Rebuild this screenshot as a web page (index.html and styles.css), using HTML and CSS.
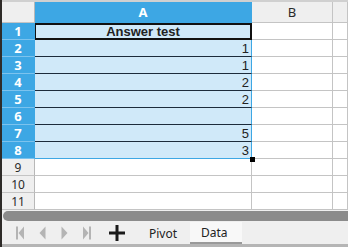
FILE: index.html
```html
<!DOCTYPE html>
<html>
<head>
<meta charset="utf-8">
<link rel="stylesheet" href="styles.css">
</head>
<body>
<div class="app">
  <div class="topline"></div>
  <div class="sheet">
    <div class="row hdr">
      <div class="rh corner"></div>
      <div class="ch ca sel-h">A</div>
      <div class="ch cb">B</div>
      <div class="ch cc"></div>
    </div>
    <div class="row">
      <div class="rh sel-h">1</div>
      <div class="c ca cursor">Answer test</div>
      <div class="c cb"></div><div class="c cc"></div>
    </div>
    <div class="row">
      <div class="rh sel-h">2</div>
      <div class="c ca sel">1</div>
      <div class="c cb"></div><div class="c cc"></div>
    </div>
    <div class="row">
      <div class="rh sel-h">3</div>
      <div class="c ca sel">1</div>
      <div class="c cb"></div><div class="c cc"></div>
    </div>
    <div class="row">
      <div class="rh sel-h">4</div>
      <div class="c ca sel">2</div>
      <div class="c cb"></div><div class="c cc"></div>
    </div>
    <div class="row">
      <div class="rh sel-h">5</div>
      <div class="c ca sel">2</div>
      <div class="c cb"></div><div class="c cc"></div>
    </div>
    <div class="row">
      <div class="rh sel-h">6</div>
      <div class="c ca sel"></div>
      <div class="c cb"></div><div class="c cc"></div>
    </div>
    <div class="row">
      <div class="rh sel-h">7</div>
      <div class="c ca sel">5</div>
      <div class="c cb"></div><div class="c cc"></div>
    </div>
    <div class="row">
      <div class="rh sel-h">8</div>
      <div class="c ca sel last">3<span class="handle"></span></div>
      <div class="c cb"></div><div class="c cc"></div>
    </div>
    <div class="row">
      <div class="rh">9</div>
      <div class="c ca"></div>
      <div class="c cb"></div><div class="c cc"></div>
    </div>
    <div class="row">
      <div class="rh">10</div>
      <div class="c ca"></div>
      <div class="c cb"></div><div class="c cc"></div>
    </div>
    <div class="row">
      <div class="rh">11</div>
      <div class="c ca"></div>
      <div class="c cb"></div><div class="c cc"></div>
    </div>
  </div>
  <div class="scrollbar"><div class="thumb"></div></div>
  <div class="tabbar">
    <svg class="nav n1" width="8" height="14" viewBox="0 0 8 14"><rect x="0" y="0.5" width="2" height="13" fill="#b4b4b4"/><polygon points="8,0.5 2.5,7 8,13.5" fill="#b4b4b4"/></svg>
    <svg class="nav n2" width="7" height="14" viewBox="0 0 7 14"><polygon points="6.5,0.5 0.5,7 6.5,13.5" fill="#b4b4b4"/></svg>
    <svg class="nav n3" width="7" height="14" viewBox="0 0 7 14"><polygon points="0.5,0.5 6.5,7 0.5,13.5" fill="#b4b4b4"/></svg>
    <svg class="nav n4" width="8" height="14" viewBox="0 0 8 14"><polygon points="0,0.5 5.5,7 0,13.5" fill="#b4b4b4"/><rect x="6" y="0.5" width="2" height="13" fill="#b4b4b4"/></svg>
    <svg class="add" width="16" height="16" viewBox="0 0 16 16"><rect x="0" y="6.5" width="16" height="3" fill="#1a1a1a"/><rect x="6.5" y="0" width="3" height="16" fill="#1a1a1a"/></svg>
    <div class="tab pivot">Pivot</div>
    <div class="tab active">Data</div>
  </div>
  <div class="bottomline"></div>
</div>
</body>
</html>
```

FILE: styles.css
```css
html, body {
  margin: 0;
  padding: 0;
  width: 348px;
  height: 247px;
  overflow: hidden;
  background: #efefef;
}
.app {
  display: flex;
  flex-direction: column;
  height: 247px;
  border-left: 2px solid #2e2b28;
  box-sizing: border-box;
}
.topline {
  height: 2px;
  background: #d0d0d0;
}
.sheet {
  display: flex;
  flex-direction: column;
  background: #fff;
}
.row {
  display: grid;
  grid-template-columns: 33px 217px 81px 15px;
  height: 17px;
}
.row.hdr {
  height: 21px;
}
.rh, .ch, .c {
  box-sizing: border-box;
  border-right: 1px solid #c4c4c4;
  border-bottom: 1px solid #c4c4c4;
  overflow: hidden;
  white-space: nowrap;
}
.rh, .ch {
  font-family: "Noto Sans", sans-serif;
  font-size: 12px;
  color: #2a2a2a;
  background: #efefef;
  display: flex;
  align-items: center;
  justify-content: center;
}
.rh {
  border-right-color: #b8b8b8;
}
.ch.cb {
  font-size: 13px;
}
.sel-h {
  background: #3da7e4;
  color: #fff;
  font-weight: bold;
  font-size: 13px;
  border-bottom-color: #7cc3ee;
  border-right-color: #3da7e4;
}
.ch.sel-h {
  border-bottom-color: #3da7e4;
}
.c {
  font-family: "Liberation Sans", Arial, sans-serif;
  font-size: 13px;
  color: #222;
  display: flex;
  align-items: center;
  justify-content: flex-end;
  padding-right: 2px;
  line-height: 1;
}
.c.sel {
  background: #d0e9f9;
  border-bottom-color: #1c2b3b;
  border-right-color: #3da7e4;
  position: relative;
  overflow: visible;
}
.c.sel.last {
  border-bottom-color: #3da7e4;
}
.c.cursor {
  background: #d0e9f9;
  border: 2px solid #111;
  border-left-width: 1px;
  justify-content: center;
  font-weight: bold;
  padding: 0;
}
.handle {
  position: absolute;
  right: -4px;
  bottom: -4px;
  width: 5px;
  height: 5px;
  background: #000;
  z-index: 2;
}
.scrollbar {
  height: 12px;
  background: #efefef;
  display: flex;
  align-items: center;
  padding-left: 1px;
}
.thumb {
  flex: 1;
  height: 10px;
  background: #8b8b8b;
  border-radius: 5px 0 0 5px;
}
.tabbar {
  height: 22px;
  display: flex;
  align-items: center;
  background: #efefef;
  font-family: "Noto Sans", sans-serif;
  font-size: 12px;
  color: #222;
}
.tabbar svg {
  display: block;
  flex: none;
}
.n1 { margin-left: 14px; }
.n2 { margin-left: 15px; }
.n3 { margin-left: 15px; }
.n4 { margin-left: 15px; }
.add { margin-left: 18px; }
.tab {
  height: 22px;
  display: flex;
  align-items: center;
  box-sizing: border-box;
}
.tab.pivot {
  margin-left: 24px;
}
.tab.active {
  margin-left: 13px;
  padding: 1px 13px 0 11px;
  width: 52px;
  background: #f8f8f8;
  border-bottom: 2px solid #9a9a9a;
}
.bottomline {
  height: 3px;
  background: #b5b5b5;
}
```
